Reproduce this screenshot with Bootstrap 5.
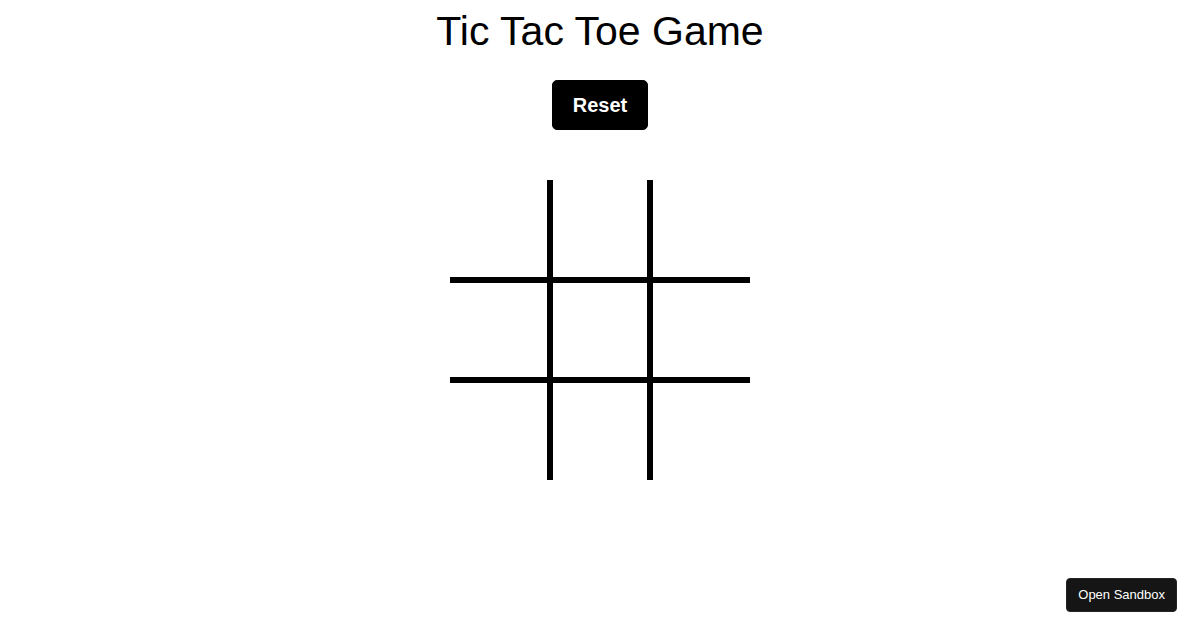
<!DOCTYPE html>
<html lang="en">
<head>
<meta charset="utf-8">
<meta name="viewport" content="width=device-width, initial-scale=1">
<title>Tic Tac Toe Game</title>
<link href="https://cdn.jsdelivr.net/npm/bootstrap@5.3.0/dist/css/bootstrap.min.css" rel="stylesheet">
<style>
  body { font-family: "Liberation Sans", Arial, sans-serif; color: #000; }
  .game-title { font-size: 41px; line-height: 62px; }
  .btn-reset {
    --bs-btn-color: #fff; --bs-btn-bg: #000; --bs-btn-border-color: #000;
    --bs-btn-hover-color: #fff; --bs-btn-hover-bg: #222;
    --bs-btn-padding-x: 20px; --bs-btn-padding-y: 9px;
    --bs-btn-font-size: 20px; --bs-btn-border-radius: 5px;
    margin: 18px 0 50px;
  }
  .board { display: grid; grid-template-columns: repeat(3, 100px); grid-auto-rows: 100px; }
  .cell { background: none; border: 0 solid #000; border-radius: 0; padding: 0; }
  .cell:not(:nth-child(3n)) { border-right-width: 3px; }
  .cell:not(:nth-child(3n+1)) { border-left-width: 3px; }
  .cell:nth-child(-n+6) { border-bottom-width: 3px; }
  .cell:nth-child(n+4) { border-top-width: 3px; }
  .btn-sandbox {
    --bs-btn-color: #fff; --bs-btn-bg: #151515; --bs-btn-border-color: #242424;
    --bs-btn-hover-color: #fff; --bs-btn-hover-bg: #333;
    --bs-btn-padding-x: 11px; --bs-btn-padding-y: 6px;
    --bs-btn-font-size: 13px; --bs-btn-border-radius: 4px;
    line-height: 20px; margin: 0 23px 18px 0;
  }
</style>
</head>
<body class="min-vh-100 d-flex flex-column">
<main class="d-flex flex-column align-items-center flex-grow-1">
  <h1 class="game-title fw-normal text-center mb-0">Tic Tac Toe Game</h1>
  <button type="button" class="btn btn-reset fw-bold">Reset</button>
  <div class="board" role="group" aria-label="Game board">
    <button type="button" class="cell" aria-label="Square 1"></button>
    <button type="button" class="cell" aria-label="Square 2"></button>
    <button type="button" class="cell" aria-label="Square 3"></button>
    <button type="button" class="cell" aria-label="Square 4"></button>
    <button type="button" class="cell" aria-label="Square 5"></button>
    <button type="button" class="cell" aria-label="Square 6"></button>
    <button type="button" class="cell" aria-label="Square 7"></button>
    <button type="button" class="cell" aria-label="Square 8"></button>
    <button type="button" class="cell" aria-label="Square 9"></button>
  </div>
</main>
<footer class="d-flex justify-content-end">
  <button type="button" class="btn btn-sandbox">Open Sandbox</button>
</footer>
<script src="https://cdn.jsdelivr.net/npm/bootstrap@5.3.0/dist/js/bootstrap.bundle.min.js"></script>
</body>
</html>
